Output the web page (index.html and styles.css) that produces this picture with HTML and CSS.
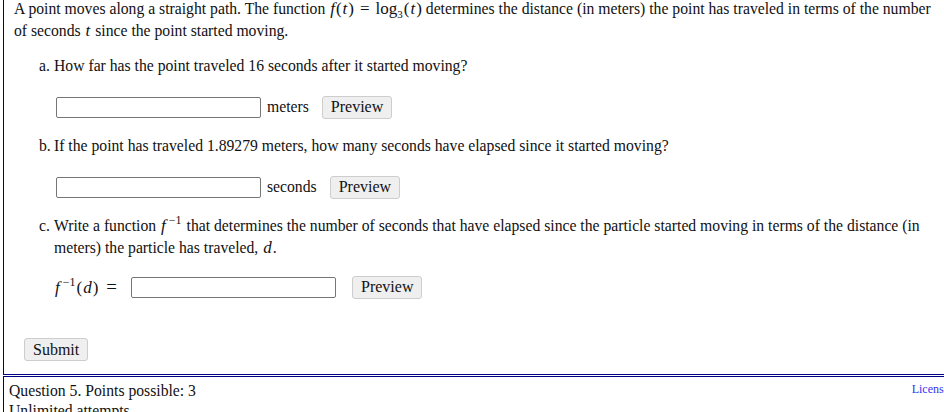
FILE: index.html
```html
<!DOCTYPE html>
<html lang="en">
<head>
    <meta charset="UTF-8">
    <meta name="viewport" content="width=device-width, initial-scale=1.0">
    <title>Question 4</title>
    <link rel="stylesheet" href="styles.css">
</head>
<body>

    <div class="page">
        <div class="question">
            <p class="intro">A point moves along a straight path. The function <span class="math"><i>f</i>(<i>t</i>)<span class="eq">=</span>log<sub>3</sub>(<i>t</i>)</span> determines the distance (in meters) the point has traveled in terms of the number of seconds <span class="math"><i>t</i></span> since the point started moving.</p>

            <div class="part">
                <div class="part-q"><span class="marker">a.</span><span>How far has the point traveled 16 seconds after it started moving?</span></div>
                <div class="answer-row">
                    <input type="text" class="answer">
                    <span class="unit">meters</span>
                    <button class="preview">Preview</button>
                </div>
            </div>

            <div class="part">
                <div class="part-q"><span class="marker">b.</span><span>If the point has traveled 1.89279 meters, how many seconds have elapsed since it started moving?</span></div>
                <div class="answer-row">
                    <input type="text" class="answer">
                    <span class="unit">seconds</span>
                    <button class="preview">Preview</button>
                </div>
            </div>

            <div class="part">
                <div class="part-q part-q-c"><span class="marker">c.</span><span>Write a function <span class="math"><i>f</i><sup>&minus;1</sup></span> that determines the number of seconds that have elapsed since the particle started moving in terms of the distance (in meters) the particle has traveled, <span class="math"><i>d</i></span>.</span></div>
                <div class="answer-row math-row">
                    <span class="math fn"><i>f</i><sup>&minus;1</sup>(<i>d</i>)<span class="eq">=</span></span>
                    <input type="text" class="answer">
                    <button class="preview preview-wide">Preview</button>
                </div>
            </div>

            <button class="submit">Submit</button>
        </div>

        <div class="next">
            <div class="next-head">
                <span>Question 5. Points possible: 3</span>
                <a class="license" href="#">License</a>
            </div>
            <div>Unlimited attempts.</div>
        </div>
    </div>

</body>
</html>
```

FILE: styles.css
```css
html, body {
    margin: 0;
    padding: 0;
}
body {
    font-family: "Liberation Serif", "Times New Roman", serif;
    font-size: 15.7px;
    line-height: 22px;
    color: #111;
    background: #fff;
}
.page {
    width: 944px;
    height: 412px;
    overflow: hidden;
}
.question {
    margin: -2px 0 0 3px;
    padding: 0 0 13px 10px;
    border-left: 1px solid #000080;
    border-bottom: 1px solid #000080;
}
.intro {
    margin: 0 0 13px 0;
}
.math {
    font-size: 17px;
}
.math i {
    font-style: italic;
    margin: 0 1px;
}
.math sub {
    font-size: 11px;
    line-height: 0;
    vertical-align: -4px;
    margin-right: 1px;
}
.math sup {
    font-size: 12px;
    line-height: 0;
    vertical-align: 7px;
    margin: 0 1px 0 2px;
}
.eq {
    margin: 0 6px;
}
.part-q {
    display: flex;
    margin: 0 0 19px 25px;
}
.part-q-c {
    margin-bottom: 17px;
}
.marker {
    flex: none;
    width: 15px;
}
.answer-row {
    display: flex;
    align-items: center;
    height: 22px;
    margin: 0 0 17px 42px;
}
.answer {
    box-sizing: border-box;
    width: 205px;
    height: 21px;
    margin: 0 6px 0 0;
    padding: 0 4px;
    border: 1px solid #767676;
    border-radius: 2px;
    background: #fff;
}
.unit {
    margin-right: 13px;
}
.preview, .submit {
    font-family: "Liberation Serif", "Times New Roman", serif;
    font-size: 16px;
    line-height: 20px;
    height: 23px;
    padding: 0 8px;
    color: #111;
    background: #efefef;
    border: 1px solid #cdcdcd;
    border-radius: 3px;
}
.math-row {
    margin-left: 40px;
}
.fn {
    width: 77px;
    flex: none;
}
.fn .eq {
    font-size: 19px;
    margin: 0 0 0 8px;
}
.preview-wide {
    margin-left: 10px;
}
.submit {
    display: block;
    margin: 40px 0 0 10px;
}
.next {
    width: 940px;
    margin: 1px 0 0 3px;
    padding: 4px 0 0 5px;
    line-height: 20px;
    border-top: 1px solid #000080;
    border-left: 1px solid #000080;
}
.next-head {
    display: flex;
    justify-content: space-between;
    align-items: flex-start;
}
.license {
    font-size: 12px;
    line-height: 16px;
    color: #3333ee;
    text-decoration: none;
}
```
